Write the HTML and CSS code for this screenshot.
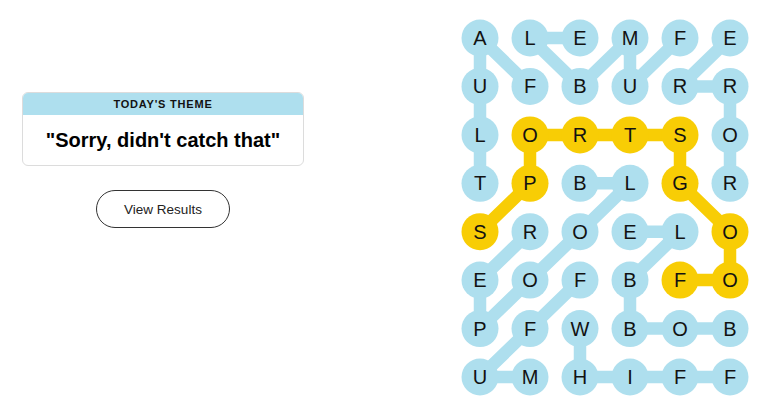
FILE: index.html
```html
<!DOCTYPE html>
<html><head>
<link rel="stylesheet" href="styles.css">
</head>
<body>

<div class="page">
  <section class="intro">
    <div class="theme-card">
      <div class="theme-label">TODAY'S THEME</div>
      <div class="theme-title">"Sorry, didn't catch that"</div>
    </div>
    <button class="results-btn">View Results</button>
  </section>

  <section class="board">
    <svg class="grid" width="300" height="390" viewBox="0 0 300 390" xmlns="http://www.w3.org/2000/svg">
      <!-- links between the letters of each found word -->
      <g class="links">
        <!-- FAULT -->
        <polyline class="word" points="75,73.4 25,25 25,73.4 25,121.9 25,170.3" />
        <!-- FUMBLE -->
        <polyline class="word" points="225,25 175,73.4 175,25 125,73.4 75,25 125,25" />
        <!-- ERROR -->
        <polyline class="word" points="275,25 225,73.4 275,73.4 275,121.9 275,170.3" />
        <!-- BLOOPER -->
        <polyline class="word" points="125,170.3 175,170.3 125,218.7 75,267.1 25,315.6 25,267.1 75,218.7" />
        <!-- MUFF -->
        <polyline class="word" points="75,364 25,364 75,315.6 125,267.1" />
        <!-- WHIFF -->
        <polyline class="word" points="125,315.6 125,364 175,364 225,364 275,364" />
        <!-- BOBBLE -->
        <polyline class="word" points="275,315.6 225,315.6 175,315.6 175,267.1 225,218.7 175,218.7" />
        <!-- spangram -->
        <polyline class="span" points="25,218.7 75,170.3 75,121.9 125,121.9 175,121.9 225,121.9 225,170.3 275,218.7 275,267.1 225,267.1" />
      </g>

      <!-- row 1 -->
      <g class="cell"><circle cx="25" cy="25" r="18.5" /><text x="25" y="32">A</text></g>
      <g class="cell"><circle cx="75" cy="25" r="18.5" /><text x="75" y="32">L</text></g>
      <g class="cell"><circle cx="125" cy="25" r="18.5" /><text x="125" y="32">E</text></g>
      <g class="cell"><circle cx="175" cy="25" r="18.5" /><text x="175" y="32">M</text></g>
      <g class="cell"><circle cx="225" cy="25" r="18.5" /><text x="225" y="32">F</text></g>
      <g class="cell"><circle cx="275" cy="25" r="18.5" /><text x="275" y="32">E</text></g>
      <!-- row 2 -->
      <g class="cell"><circle cx="25" cy="73.4" r="18.5" /><text x="25" y="80.4">U</text></g>
      <g class="cell"><circle cx="75" cy="73.4" r="18.5" /><text x="75" y="80.4">F</text></g>
      <g class="cell"><circle cx="125" cy="73.4" r="18.5" /><text x="125" y="80.4">B</text></g>
      <g class="cell"><circle cx="175" cy="73.4" r="18.5" /><text x="175" y="80.4">U</text></g>
      <g class="cell"><circle cx="225" cy="73.4" r="18.5" /><text x="225" y="80.4">R</text></g>
      <g class="cell"><circle cx="275" cy="73.4" r="18.5" /><text x="275" y="80.4">R</text></g>
      <!-- row 3 -->
      <g class="cell"><circle cx="25" cy="121.9" r="18.5" /><text x="25" y="128.9">L</text></g>
      <g class="cell hit"><circle cx="75" cy="121.9" r="18.5" /><text x="75" y="128.9">O</text></g>
      <g class="cell hit"><circle cx="125" cy="121.9" r="18.5" /><text x="125" y="128.9">R</text></g>
      <g class="cell hit"><circle cx="175" cy="121.9" r="18.5" /><text x="175" y="128.9">T</text></g>
      <g class="cell hit"><circle cx="225" cy="121.9" r="18.5" /><text x="225" y="128.9">S</text></g>
      <g class="cell"><circle cx="275" cy="121.9" r="18.5" /><text x="275" y="128.9">O</text></g>
      <!-- row 4 -->
      <g class="cell"><circle cx="25" cy="170.3" r="18.5" /><text x="25" y="177.3">T</text></g>
      <g class="cell hit"><circle cx="75" cy="170.3" r="18.5" /><text x="75" y="177.3">P</text></g>
      <g class="cell"><circle cx="125" cy="170.3" r="18.5" /><text x="125" y="177.3">B</text></g>
      <g class="cell"><circle cx="175" cy="170.3" r="18.5" /><text x="175" y="177.3">L</text></g>
      <g class="cell hit"><circle cx="225" cy="170.3" r="18.5" /><text x="225" y="177.3">G</text></g>
      <g class="cell"><circle cx="275" cy="170.3" r="18.5" /><text x="275" y="177.3">R</text></g>
      <!-- row 5 -->
      <g class="cell hit"><circle cx="25" cy="218.7" r="18.5" /><text x="25" y="225.7">S</text></g>
      <g class="cell"><circle cx="75" cy="218.7" r="18.5" /><text x="75" y="225.7">R</text></g>
      <g class="cell"><circle cx="125" cy="218.7" r="18.5" /><text x="125" y="225.7">O</text></g>
      <g class="cell"><circle cx="175" cy="218.7" r="18.5" /><text x="175" y="225.7">E</text></g>
      <g class="cell"><circle cx="225" cy="218.7" r="18.5" /><text x="225" y="225.7">L</text></g>
      <g class="cell hit"><circle cx="275" cy="218.7" r="18.5" /><text x="275" y="225.7">O</text></g>
      <!-- row 6 -->
      <g class="cell"><circle cx="25" cy="267.1" r="18.5" /><text x="25" y="274.1">E</text></g>
      <g class="cell"><circle cx="75" cy="267.1" r="18.5" /><text x="75" y="274.1">O</text></g>
      <g class="cell"><circle cx="125" cy="267.1" r="18.5" /><text x="125" y="274.1">F</text></g>
      <g class="cell"><circle cx="175" cy="267.1" r="18.5" /><text x="175" y="274.1">B</text></g>
      <g class="cell hit"><circle cx="225" cy="267.1" r="18.5" /><text x="225" y="274.1">F</text></g>
      <g class="cell hit"><circle cx="275" cy="267.1" r="18.5" /><text x="275" y="274.1">O</text></g>
      <!-- row 7 -->
      <g class="cell"><circle cx="25" cy="315.6" r="18.5" /><text x="25" y="322.6">P</text></g>
      <g class="cell"><circle cx="75" cy="315.6" r="18.5" /><text x="75" y="322.6">F</text></g>
      <g class="cell"><circle cx="125" cy="315.6" r="18.5" /><text x="125" y="322.6">W</text></g>
      <g class="cell"><circle cx="175" cy="315.6" r="18.5" /><text x="175" y="322.6">B</text></g>
      <g class="cell"><circle cx="225" cy="315.6" r="18.5" /><text x="225" y="322.6">O</text></g>
      <g class="cell"><circle cx="275" cy="315.6" r="18.5" /><text x="275" y="322.6">B</text></g>
      <!-- row 8 -->
      <g class="cell"><circle cx="25" cy="364" r="18.5" /><text x="25" y="371">U</text></g>
      <g class="cell"><circle cx="75" cy="364" r="18.5" /><text x="75" y="371">M</text></g>
      <g class="cell"><circle cx="125" cy="364" r="18.5" /><text x="125" y="371">H</text></g>
      <g class="cell"><circle cx="175" cy="364" r="18.5" /><text x="175" y="371">I</text></g>
      <g class="cell"><circle cx="225" cy="364" r="18.5" /><text x="225" y="371">F</text></g>
      <g class="cell"><circle cx="275" cy="364" r="18.5" /><text x="275" y="371">F</text></g>
    </svg>
  </section>
</div>

</body>
</html>
```

FILE: styles.css
```css
/* Page frame */
body {
  margin: 0;
  background: #fff;
  color: #121212;
  font-family: "Liberation Sans", Arial, sans-serif;
}

.page {
  display: flex;
  align-items: flex-start;
}

/* Left column: theme card and results button */
.intro {
  width: 282px;
  margin-left: 22px;
  padding-top: 92px;
  display: flex;
  flex-direction: column;
  align-items: center;
}

.theme-card {
  width: 100%;
  box-sizing: border-box;
  border: 1px solid #dcdcdc;
  border-radius: 6px;
  overflow: hidden;
  text-align: center;
}

.theme-label {
  height: 22px;
  line-height: 23px;
  background-color: #aedfee;
  font-size: 11px;
  font-weight: bold;
  letter-spacing: 0.8px;
}

.theme-title {
  height: 50px;
  line-height: 50px;
  font-size: 20px;
  font-weight: bold;
  color: #000;
}

.results-btn {
  margin-top: 24px;
  width: 134px;
  height: 38px;
  border: 1px solid #333;
  border-radius: 19px;
  background: #fff;
  color: #222;
  font-family: "Liberation Sans", Arial, sans-serif;
  font-size: 13.5px;
  cursor: pointer;
}

/* Right column: letter grid */
.board {
  margin-left: 151px;
  margin-top: 13px;
}

.grid {
  display: block;
}

.links polyline {
  fill: none;
  stroke-width: 12.5px;
  stroke-linejoin: round;
  stroke-linecap: round;
}

.links .word {
  stroke: #aedfee;
}

.links .span {
  stroke: #f8cd05;
}

.cell circle {
  fill: #aedfee;
}

.cell.hit circle {
  fill: #f8cd05;
}

.cell text {
  font-family: "Liberation Sans", Arial, sans-serif;
  font-size: 20px;
  fill: #121212;
  text-anchor: middle;
}
```
